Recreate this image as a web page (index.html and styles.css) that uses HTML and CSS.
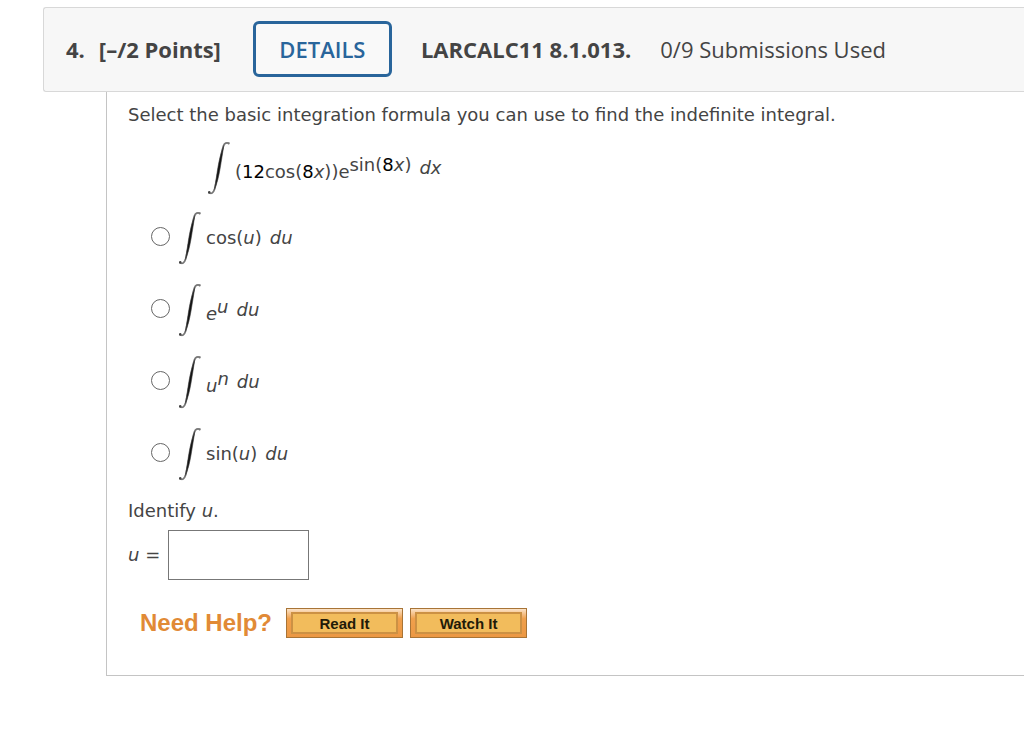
FILE: index.html
```html
<!DOCTYPE html>
<html lang="en">

<head>
  <meta charset="UTF-8">
  <meta name="viewport" content="width=device-width, initial-scale=1.0">
  <title>LARCALC11 8.1.013.</title>
  <link rel="stylesheet" href="styles.css">
</head>
<body>
  <!-- integral sign shared by every formula -->
  <svg class="defs" aria-hidden="true">
    <symbol id="integral" viewBox="0 0 22 54">
      <path d="M0.6 51.4 Q4.6 54.4 6.6 48 C8.4 41 9.8 33 11 26.5 C12.2 19 13.6 11 15.4 5 Q17 0.6 21.4 2.4" fill="none" stroke="#777" stroke-width="1.8"/>
      <path d="M6.4 48.5 C8 40 8.8 33 9.9 26.5 C11.2 19 13 11 15.8 4.5 C14.6 12 13.4 20 12.2 27 C11 34 9.4 42 6.4 48.5Z" fill="#111" stroke="#444" stroke-width="0.6"/>
      <circle cx="1.2" cy="51.4" r="1.3" fill="#444"/>
      <circle cx="20.6" cy="2.4" r="1" fill="#777"/>
    </symbol>
  </svg>

  <main class="question">
    <header class="question-header">
      <h2 class="points"><span>4.</span><span>[–/2 Points]</span></h2>
      <button type="button" class="details">DETAILS</button>
      <strong class="source">LARCALC11 8.1.013.</strong>
      <span class="submissions">0/9 Submissions Used</span>
    </header>

    <form class="question-body">
      <p class="prompt" id="prompt">Select the basic integration formula you can use to find the indefinite integral.</p>

      <div class="formula problem">
        <svg class="integral" role="img" aria-label="integral"><use href="#integral"/></svg>
        <span class="term">(<b>12</b>cos(<b>8</b><i>x</i>))e<sup>sin(<b>8</b><i>x</i>)</sup></span>
        <i class="differential">dx</i>
      </div>

      <div class="options" role="radiogroup" aria-labelledby="prompt">
        <label class="formula option">
          <input type="radio" name="formula" value="cos">
          <svg class="integral" role="img" aria-label="integral"><use href="#integral"/></svg>
          <span class="term">cos(<i>u</i>)</span>
          <i class="differential">du</i>
        </label>
        <label class="formula option">
          <input type="radio" name="formula" value="exp">
          <svg class="integral" role="img" aria-label="integral"><use href="#integral"/></svg>
          <span class="term"><i>e</i><sup><i>u</i></sup></span>
          <i class="differential">du</i>
        </label>
        <label class="formula option">
          <input type="radio" name="formula" value="power">
          <svg class="integral" role="img" aria-label="integral"><use href="#integral"/></svg>
          <span class="term"><i>u</i><sup><i>n</i></sup></span>
          <i class="differential">du</i>
        </label>
        <label class="formula option">
          <input type="radio" name="formula" value="sin">
          <svg class="integral" role="img" aria-label="integral"><use href="#integral"/></svg>
          <span class="term">sin(<i>u</i>)</span>
          <i class="differential">du</i>
        </label>
      </div>

      <p class="identify">Identify <i>u</i>.</p>
      <div class="answer">
        <label for="u-answer"><i>u</i> =</label>
        <input type="text" id="u-answer" name="u">
      </div>

      <div class="help">
        <span class="help-title">Need Help?</span>
        <button type="button" class="help-button"><span>Read It</span></button>
        <button type="button" class="help-button"><span>Watch It</span></button>
      </div>
    </form>
  </main>
</body>
</html>
```
FILE: styles.css
```css
* {
  box-sizing: border-box;
}

body {
  margin: 0;
  background: #fff;
  color: #444;
  font-family: "DejaVu Sans", Verdana, sans-serif;
  font-size: 18px;
  line-height: 24px;
}

.defs {
  display: block;
  width: 0;
  height: 0;
}

.question {
  padding: 7px 0 0 43px;
}

.question-header {
  display: flex;
  align-items: center;
  min-height: 85px;
  padding: 0 0 2px 22px;
  border: 1px solid #d8d8d8;
  border-right: 0;
  border-radius: 3px 0 0 3px;
  background: #f7f7f7;
  font-family: "Open Sans", sans-serif;
  font-size: 22px;
  white-space: nowrap;
}

.points {
  display: flex;
  gap: 14px;
  margin: 0 32px 0 0;
  font-size: 22px;
}

.details {
  width: 139px;
  height: 56px;
  margin-right: 29px;
  padding: 0;
  border: 3px solid #29659b;
  border-radius: 6px;
  background: #f9f9f9;
  color: #29659b;
  font: 600 22px "Open Sans", sans-serif;
}

.source {
  margin-right: 29px;
}

.question-body {
  margin-left: 63px;
  padding: 11px 0 37px 21px;
  border-left: 1px solid #c4c4c4;
  border-bottom: 1px solid #c4c4c4;
}

.prompt {
  margin: 0;
}

.identify {
  margin: 9px 0 0;
}

.formula {
  display: flex;
  align-items: center;
  min-height: 72px;
}

.problem {
  min-height: 64px;
  margin: 9px 0 2px;
  padding-left: 80px;
}

.option {
  padding-left: 23px;
}

.option input {
  appearance: none;
  width: 19px;
  height: 19px;
  margin: 0 9px 4px 0;
  border: 1px solid #666;
  border-radius: 50%;
  background: #fff;
}

.option input:checked {
  border: 6px solid #29659b;
}

.integral {
  width: 22px;
  height: 54px;
  margin-right: 5px;
}

.term {
  margin-right: 8px;
}

.term b {
  color: #000;
  font-weight: normal;
}

.term sup {
  font-size: 18px;
  line-height: 24px;
}

.answer {
  display: flex;
  align-items: center;
  gap: 8px;
  margin-top: 7px;
}

.answer input {
  width: 141px;
  height: 50px;
  padding: 0 8px;
  border: 1px solid #777;
  font: inherit;
}

.help {
  display: flex;
  align-items: center;
  gap: 7px;
  margin: 28px 0 0 12px;
}

.help-title {
  margin-right: 7px;
  color: #e18a36;
  font: bold 24px "Liberation Sans", Arial, sans-serif;
}

.help-button {
  display: flex;
  width: 117px;
  height: 30px;
  padding: 3px 4px;
  border: 1px solid #a87436;
  background: linear-gradient(#fbe3c8, #f0a04c 35%, #ec9844);
}

.help-button span {
  flex: 1;
  border: 2px solid #cc9144;
  background: #f2bc5c;
  color: #221a08;
  font: bold 15px/19px "Liberation Sans", Arial, sans-serif;
}
```
